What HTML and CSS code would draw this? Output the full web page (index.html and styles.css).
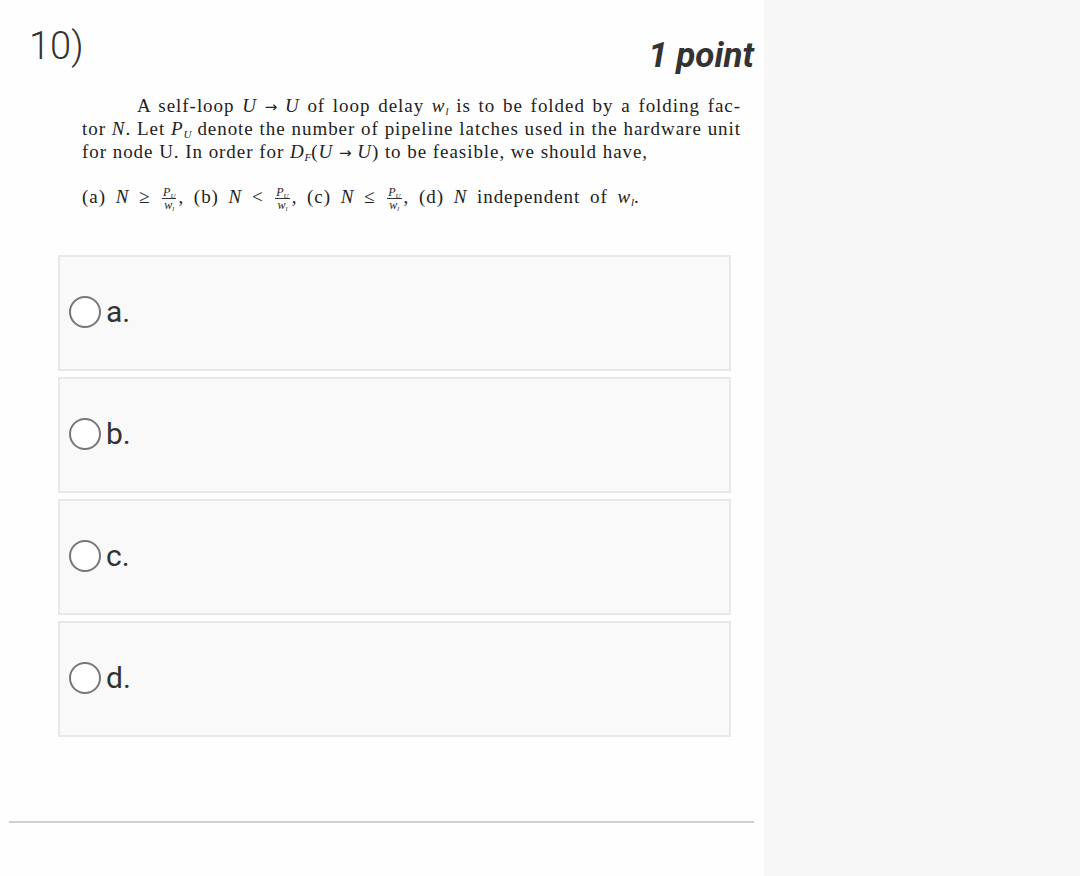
FILE: index.html
```html
<!DOCTYPE html>
<html>
<head>
<meta charset="utf-8">
<link rel="stylesheet" href="styles.css">
</head>
<body>
<div class="page">
  <main class="main">
    <div class="head">
      <div class="qno">10)</div>
      <div class="pts">1 point</div>
    </div>
    <div class="qtext">
      <div class="para">
        <span class="ln jl"><span class="ind"></span>A self-loop <i>U</i> <span class="ar">→</span> <i>U</i> of loop delay <i>w<sub>l</sub></i> is to be folded by a folding fac-</span>
        <span class="ln jl">tor <i>N</i>. Let <i>P<sub>U</sub></i> denote the number of pipeline latches used in the hardware unit</span>
        <span class="ln">for node U. In order for <i>D<sub>F</sub></i>(<i>U</i> <span class="ar">→</span> <i>U</i>) to be feasible, we should have,</span>
      </div>
      <p class="opts">(a) <i>N</i> ≥ <span class="frac"><span class="num"><i>P<sub>U</sub></i></span><span class="den"><i>w<sub>l</sub></i></span></span>, (b) <i>N</i> &lt; <span class="frac"><span class="num"><i>P<sub>U</sub></i></span><span class="den"><i>w<sub>l</sub></i></span></span>, (c) <i>N</i> ≤ <span class="frac"><span class="num"><i>P<sub>U</sub></i></span><span class="den"><i>w<sub>l</sub></i></span></span>, (d) <i>N</i> independent of <i>w<sub>l</sub></i>.</p>
    </div>
    <div class="answers">
      <label class="ans"><span class="radio"></span><span class="lbl">a.</span></label>
      <label class="ans"><span class="radio"></span><span class="lbl">b.</span></label>
      <label class="ans"><span class="radio"></span><span class="lbl">c.</span></label>
      <label class="ans"><span class="radio"></span><span class="lbl">d.</span></label>
    </div>
    <div class="rule"></div>
  </main>
  <aside class="side"></aside>
</div>
</body>
</html>
```

FILE: styles.css
```css
html, body {
  margin: 0;
  padding: 0;
  background: #ffffff;
}
.page {
  display: flex;
  width: 1080px;
  height: 876px;
}
.main {
  width: 764px;
  flex: none;
  background: #fefefe;
  box-sizing: border-box;
  padding-top: 26px;
}
.side {
  flex: 1;
  background: #f7f7f7;
}
.head {
  display: flex;
  justify-content: space-between;
  align-items: flex-start;
  padding-left: 29px;
  padding-right: 10px;
  height: 68px;
}
.qno {
  font-family: Roboto, "Liberation Sans", sans-serif;
  font-weight: 300;
  font-size: 38px;
  line-height: 40px;
  color: #333333;
}
.pts {
  font-family: Roboto, "Liberation Sans", sans-serif;
  font-weight: 700;
  font-style: italic;
  font-size: 35px;
  line-height: 40px;
  margin-top: 10px;
  color: #333333;
}
.qtext {
  margin-left: 82px;
  width: 659px;
  font-family: "Liberation Serif", "DejaVu Serif", serif;
  font-size: 19px;
  letter-spacing: 0.95px;
  color: #222222;
}
.para {
  line-height: 23px;
}
.ln {
  display: block;
  text-align: left;
  height: 23px;
}
.jl {
  text-align: justify;
  text-align-last: justify;
}
.ind {
  display: inline-block;
  width: 55px;
}
.ar {
  font-family: "DejaVu Sans", sans-serif;
  font-size: 15px;
  letter-spacing: 0;
}
sub {
  font-size: 11px;
  line-height: 0;
  vertical-align: -3px;
  letter-spacing: 0;
}
.opts {
  margin: 22px 0 0 0;
  line-height: 24px;
  height: 24px;
  word-spacing: 4px;
}
.frac {
  display: inline-flex;
  flex-direction: column;
  align-items: center;
  vertical-align: 7px;
  font-size: 12px;
  line-height: 10px;
  margin: 0 2px;
  letter-spacing: 0;
  word-spacing: 0;
}
.frac sub {
  font-size: 7px;
  vertical-align: -2px;
}
.num {
  border-bottom: 1px solid #333;
  padding: 0 1px 1px;
}
.den {
  padding-top: 1px;
}
.answers {
  margin-top: 46px;
  margin-left: 58px;
  width: 673px;
  display: flex;
  flex-direction: column;
  gap: 6px;
}
.ans {
  height: 116px;
  box-sizing: border-box;
  border: 2px solid #e8e8e8;
  background: #f9f9f9;
  display: flex;
  align-items: center;
  padding-left: 9px;
  padding-bottom: 3px;
}
.radio {
  width: 28px;
  height: 28px;
  border: 2px solid #777777;
  border-radius: 50%;
  background: #ffffff;
  flex: none;
}
.lbl {
  margin-left: 5px;
  font-family: Roboto, "Liberation Sans", sans-serif;
  font-size: 30px;
  color: #333333;
}
.rule {
  margin-top: 84px;
  margin-left: 9px;
  width: 745px;
  height: 2px;
  background: #cfcfcf;
}
```
